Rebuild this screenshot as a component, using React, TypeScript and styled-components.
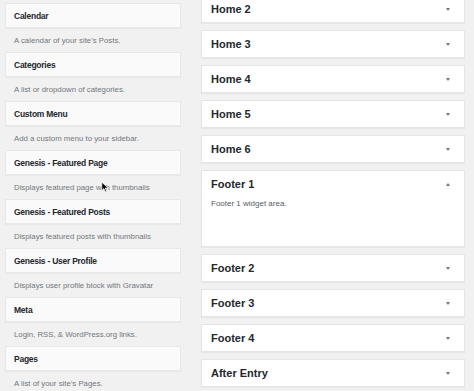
import styled, { createGlobalStyle } from "styled-components";

type Widget = {
  title: string;
  description: string;
};

type Area = {
  title: string;
  description?: string;
};

const widgets: Widget[] = [
  { title: "Calendar", description: "A calendar of your site’s Posts." },
  { title: "Categories", description: "A list or dropdown of categories." },
  { title: "Custom Menu", description: "Add a custom menu to your sidebar." },
  {
    title: "Genesis - Featured Page",
    description: "Displays featured page with thumbnails",
  },
  {
    title: "Genesis - Featured Posts",
    description: "Displays featured posts with thumbnails",
  },
  {
    title: "Genesis - User Profile",
    description: "Displays user profile block with Gravatar",
  },
  { title: "Meta", description: "Login, RSS, & WordPress.org links." },
  { title: "Pages", description: "A list of your site’s Pages." },
];

const areas: Area[] = [
  { title: "Home 2" },
  { title: "Home 3" },
  { title: "Home 4" },
  { title: "Home 5" },
  { title: "Home 6" },
  { title: "Footer 1", description: "Footer 1 widget area." },
  { title: "Footer 2" },
  { title: "Footer 3" },
  { title: "Footer 4" },
  { title: "After Entry" },
];

const App = () => {
  return (
    <>
      <GlobalStyle />
      <Page>
        <Available>
          {widgets.map((w) => (
            <WidgetItem key={w.title}>
              <WidgetTop>{w.title}</WidgetTop>
              <WidgetDesc>{w.description}</WidgetDesc>
            </WidgetItem>
          ))}
          <Cursor viewBox="0 0 10 14" width={8} height={12}>
            <path
              d="M1 1 L1 11.5 L3.6 9 L5.4 13 L7 12.3 L5.3 8.4 L8.8 8.4 Z"
              fill="#000"
              stroke="#fff"
              strokeWidth="0.9"
              strokeLinejoin="round"
            />
          </Cursor>
        </Available>
        <Sidebars>
          {areas.map((a) => (
            <AreaCard key={a.title} open={!!a.description}>
              <AreaHead>
                <AreaTitle>{a.title}</AreaTitle>
                <Toggle open={!!a.description} />
              </AreaHead>
              {a.description && <AreaDesc>{a.description}</AreaDesc>}
            </AreaCard>
          ))}
        </Sidebars>
      </Page>
    </>
  );
};

const GlobalStyle = createGlobalStyle`
  html, body {
    margin: 0;
    padding: 0;
    background: #f1f1f1;
    overflow: hidden;
  }
  body {
    font-family: "Liberation Sans", Arial, sans-serif;
    color: #23282d;
  }
`;

const Page = styled.div`
  display: flex;
  align-items: flex-start;
  width: 474px;
  height: 391px;
  overflow: hidden;
`;

const Available = styled.div`
  position: relative;
  display: flex;
  flex-direction: column;
  width: 176px;
  padding: 3px 0 0 5px;
`;

const WidgetItem = styled.div`
  display: flex;
  flex-direction: column;
`;

const WidgetTop = styled.div`
  display: flex;
  align-items: center;
  height: 23px;
  padding: 0 8px;
  background: #fafafa;
  border: 1px solid #e8e8e8;
  box-shadow: 0 1px 1px rgba(0, 0, 0, 0.03);
  font-size: 8.5px;
  font-weight: 700;
  letter-spacing: -0.25px;
  color: #23282d;
`;

const WidgetDesc = styled.div`
  display: flex;
  align-items: center;
  height: 24px;
  padding: 0 9px;
  font-size: 7.8px;
  color: #72777c;
`;

const Cursor = styled.svg`
  position: absolute;
  left: 101px;
  top: 181px;
`;

const Sidebars = styled.div`
  display: flex;
  flex-direction: column;
  gap: 7px;
  width: 264px;
  margin: -5px 0 0 20px;
`;

const AreaCard = styled.div<{ open: boolean }>`
  display: flex;
  flex-direction: column;
  height: ${(p) => (p.open ? 75 : 26)}px;
  background: #fff;
  border: 1px solid #e5e5e5;
  box-shadow: 0 1px 1px rgba(0, 0, 0, 0.04);
`;

const AreaHead = styled.div`
  display: flex;
  align-items: center;
  justify-content: space-between;
  height: 26px;
  padding: 0 14px 0 9px;
`;

const AreaTitle = styled.div`
  font-size: 11px;
  font-weight: 700;
  color: #23282d;
`;

const Toggle = styled.span<{ open: boolean }>`
  width: 0;
  height: 0;
  border-left: 2.5px solid transparent;
  border-right: 2.5px solid transparent;
  ${(p) =>
    p.open
      ? "border-bottom: 3px solid #72777c;"
      : "border-top: 3px solid #72777c;"}
`;

const AreaDesc = styled.div`
  padding: 0 9px;
  margin-top: 2px;
  font-size: 8px;
  color: #555d66;
`;

export default App;
